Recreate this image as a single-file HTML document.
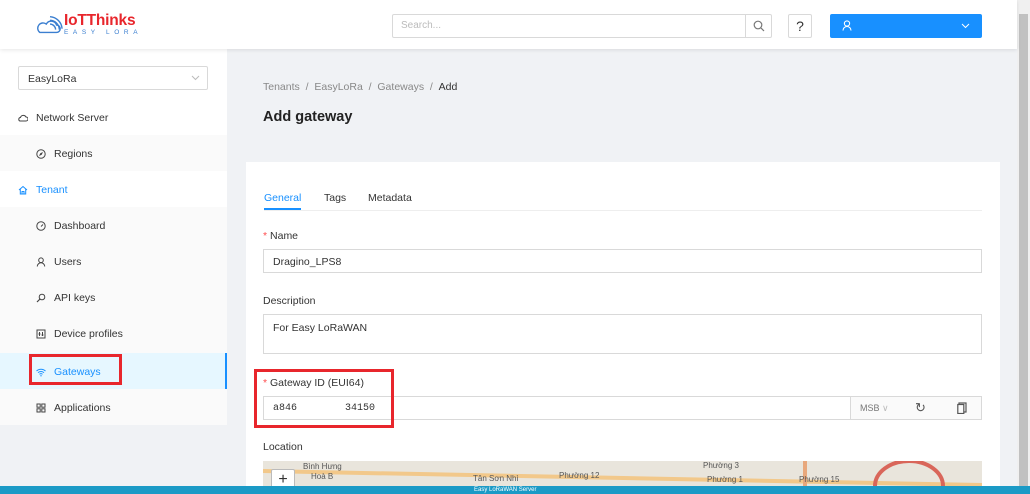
<!DOCTYPE html>
<html style="width:1030px;height:494px;overflow:hidden"><head><meta charset="utf-8"><style>
*{box-sizing:border-box;margin:0;padding:0}
html,body{width:1030px;height:494px;overflow:hidden}
body{background:#f0f2f5;font-family:"Liberation Sans",sans-serif;font-size:11px;color:#333;position:relative}
.abs{position:absolute}
.hdr{left:0;top:0;width:1017px;height:49px;background:#fff;box-shadow:0 1px 4px rgba(0,0,0,.1);z-index:2}
.side{left:0;top:49px;width:227px;height:376px;background:#fff}
.mi{position:absolute;left:0;width:227px;height:36px;line-height:38px;font-size:10.5px;color:#333}
.sub{background:#fafafa}
.ic{position:absolute;top:14px;width:10px;height:10px}
.card{left:246px;top:162px;width:754px;height:324px;background:#fff;overflow:hidden}
.inp{position:absolute;border:1px solid #d9d9d9;background:#fff;font-size:10.5px;color:#333;padding-left:9px}
.lbl{position:absolute;font-size:10.5px;color:#333}
.red{color:#ff4d4f}
.mt{position:absolute;font-size:8px;color:#555}
</style></head><body>
<div class="abs hdr">
  <svg class="abs" style="left:37px;top:14px" width="26" height="22" viewBox="0 0 28 22"><path d="M3 19h18a4 4 0 0 0 0-8 6 6 0 0 0-11-1 4.5 4.5 0 0 0-7 9z" fill="none" stroke="#3b7fd0" stroke-width="1.5"/><path d="M14 10a6 6 0 0 1 6 6M14 6a10 10 0 0 1 10 10M14 2a14 14 0 0 1 13 13" fill="none" stroke="#3b7fd0" stroke-width="1.5"/></svg>
  <div class="abs" style="left:64px;top:12px;font-weight:bold;font-size:15.5px;color:#e8262c;letter-spacing:-0.2px">IoTThinks</div>
  <div class="abs" style="left:64px;top:29px;font-size:6.5px;color:#3b7fd0;letter-spacing:4.6px">EASY LORA</div>
  <div class="abs" style="left:392px;top:14px;width:380px;height:24px;border:1px solid #d9d9d9;border-radius:2px;font-size:10px;color:#bbb;line-height:22px;padding-left:8px">Search...</div>
  <div class="abs" style="left:745px;top:14px;width:27px;height:24px;border-left:1px solid #d9d9d9"><svg style="margin:6px 0 0 7px" width="12" height="12" viewBox="0 0 12 12"><circle cx="5" cy="5" r="3.8" fill="none" stroke="#777" stroke-width="1.2"/><path d="M8 8l3 3" stroke="#777" stroke-width="1.2"/></svg></div>
  <div class="abs" style="left:788px;top:14px;width:24px;height:24px;border:1px solid #d9d9d9;border-radius:2px;text-align:center;line-height:22px;font-size:14px;color:#333">?</div>
  <div class="abs" style="left:830px;top:14px;width:152px;height:24px;background:#1890ff;border-radius:2px"><svg class="abs" style="left:12px;top:6px" width="10" height="11" viewBox="0 0 10 11"><circle cx="5" cy="3.5" r="2.6" fill="none" stroke="#fff" stroke-width="1.1"/><path d="M1 10.5a4 4 0 0 1 8 0" fill="none" stroke="#fff" stroke-width="1.1"/></svg><svg class="abs" style="left:131px;top:9px" width="9" height="6" viewBox="0 0 9 6"><path d="M1 1l3.5 3.5L8 1" fill="none" stroke="#fff" stroke-width="1"/></svg></div>
</div>
<div class="abs" style="left:1017px;top:0;width:13px;height:486px;background:#f0f0f0"><div style="margin:14px 0 0 2px;width:9px;height:472px;background:#c1c1c1"></div></div>
<div class="abs side">
  <div class="abs" style="left:18px;top:17px;width:190px;height:24px;border:1px solid #d9d9d9;border-radius:2px;line-height:24px;padding-left:9px;font-size:10.5px">EasyLoRa<svg class="abs" style="left:172px;top:8px" width="9" height="6" viewBox="0 0 9 6"><path d="M1 1l3.5 3.5L8 1" fill="none" stroke="#bbb" stroke-width="1"/></svg></div>
  <div class="mi" style="top:50px;padding-left:36px"><svg class="ic" style="left:18px" viewBox="0 0 10 10"><path d="M2 8h6a2 2 0 0 0 0-4 3 3 0 0 0-5.5 0.5A1.8 1.8 0 0 0 2 8z" fill="none" stroke="#444" stroke-width="1"/></svg>Network Server</div>
  <div class="mi sub" style="top:86px;padding-left:54px"><svg class="ic" style="left:36px" viewBox="0 0 10 10"><circle cx="5" cy="5" r="4.2" fill="none" stroke="#444" stroke-width="1"/><path d="M3 7l1.3-2.7L7 3 5.7 5.7z" fill="#444"/></svg>Regions</div>
  <div class="mi" style="top:122px;padding-left:36px;color:#1890ff"><svg class="ic" style="left:18px" viewBox="0 0 10 10"><path d="M1 5L5 1.5 9 5M2.3 4v5h5.4V4M4 9V6.5h2V9" fill="none" stroke="#1890ff" stroke-width="1"/></svg>Tenant</div>
  <div class="abs sub" style="left:0;top:158px;width:227px;height:218px"></div>
  <div class="mi" style="top:158px;padding-left:54px"><svg class="ic" style="left:36px" viewBox="0 0 10 10"><circle cx="5" cy="5" r="4.2" fill="none" stroke="#444" stroke-width="1"/><path d="M5 5.5L7 3.5" stroke="#444"/></svg>Dashboard</div>
  <div class="mi" style="top:194px;padding-left:54px"><svg class="ic" style="left:36px" viewBox="0 0 10 10"><circle cx="5" cy="3.2" r="2.3" fill="none" stroke="#444" stroke-width="1"/><path d="M1.3 9.5a3.7 3.7 0 0 1 7.4 0" fill="none" stroke="#444" stroke-width="1"/></svg>Users</div>
  <div class="mi" style="top:230px;padding-left:54px"><svg class="ic" style="left:36px" viewBox="0 0 10 10"><circle cx="6" cy="4" r="2.8" fill="none" stroke="#444" stroke-width="1"/><path d="M4 6L1 9" stroke="#444" stroke-width="1.2"/></svg>API keys</div>
  <div class="mi" style="top:266px;padding-left:54px"><svg class="ic" style="left:36px" viewBox="0 0 10 10"><rect x="1" y="1" width="8" height="8" fill="none" stroke="#444" stroke-width="1"/><path d="M3.5 3v4M6.5 3v4M2.5 5h2M5.5 6h2" stroke="#444"/></svg>Device profiles</div>
  <div class="mi" style="top:304px;padding-left:54px;background:#e6f7ff;color:#1890ff;border-right:2px solid #1890ff"><svg class="ic" style="left:36px" viewBox="0 0 10 10"><path d="M0.5 4a6.5 6.5 0 0 1 9 0M2 5.7a4.3 4.3 0 0 1 6 0M3.5 7.3a2 2 0 0 1 3 0" fill="none" stroke="#1890ff" stroke-width="1"/><circle cx="5" cy="8.8" r=".7" fill="#1890ff"/></svg>Gateways</div>
  <div class="abs" style="left:29px;top:305px;width:93px;height:31px;border:3px solid #e8262c"></div>
  <div class="mi" style="top:340px;padding-left:54px"><svg class="ic" style="left:36px" viewBox="0 0 10 10"><rect x="1" y="1" width="3.2" height="3.2" fill="none" stroke="#444"/><rect x="5.8" y="1" width="3.2" height="3.2" fill="none" stroke="#444"/><rect x="1" y="5.8" width="3.2" height="3.2" fill="none" stroke="#444"/><rect x="5.8" y="5.8" width="3.2" height="3.2" fill="none" stroke="#444"/></svg>Applications</div>
</div>
<div class="abs" style="left:263px;top:81px;font-size:10.5px;color:#888">Tenants &nbsp;/ &nbsp;EasyLoRa &nbsp;/ &nbsp;Gateways &nbsp;/ &nbsp;<span style="color:#333">Add</span></div>
<div class="abs" style="left:263px;top:109px;font-size:14.5px;font-weight:bold;color:#222">Add gateway</div>
<div class="abs card">
  <div class="abs" style="left:18px;top:30px;font-size:10.5px;color:#1890ff">General</div>
  <div class="abs" style="left:78px;top:30px;font-size:10.5px">Tags</div>
  <div class="abs" style="left:122px;top:30px;font-size:10.5px">Metadata</div>
  <div class="abs" style="left:18px;top:48px;width:718px;height:1px;background:#eee"></div>
  <div class="abs" style="left:18px;top:46px;width:37px;height:2px;background:#1890ff"></div>
  <div class="lbl" style="left:17px;top:68px"><span class="red">* </span>Name</div>
  <div class="inp" style="left:17px;top:87px;width:719px;height:24px;line-height:24px">Dragino_LPS8</div>
  <div class="lbl" style="left:17px;top:133px">Description</div>
  <div class="inp" style="left:17px;top:152px;width:719px;height:40px;padding-top:7px">For Easy LoRaWAN</div>
  <div class="lbl" style="left:17px;top:215px"><span class="red">* </span>Gateway ID (EUI64)</div>
  <div class="inp" style="left:17px;top:234px;width:719px;height:24px;line-height:24px;font-family:'Liberation Mono',monospace;font-size:10px">a846&nbsp;&nbsp;&nbsp;&nbsp;&nbsp;&nbsp;&nbsp;&nbsp;34150</div>
  <div class="abs" style="left:604px;top:235px;width:131px;height:22px;background:#fafafa;border-left:1px solid #d9d9d9;font-size:9px;color:#777;line-height:22px;padding-left:9px">MSB <span style="color:#bbb">∨</span><span style="position:absolute;left:64px;font-size:13px;color:#555">↻</span><svg class="abs" style="left:106px;top:5px" width="10" height="12" viewBox="0 0 10 12"><rect x="2" y="1" width="7" height="9" fill="none" stroke="#555" stroke-width="1.2"/><rect x="0.8" y="2.5" width="6" height="9" fill="#fafafa" stroke="#555" stroke-width="1.2"/></svg></div>
  <div class="abs" style="left:8px;top:207px;width:140px;height:59px;border:3px solid #e8262c"></div>
  <div class="lbl" style="left:17px;top:279px">Location</div>
  <svg class="abs" style="left:17px;top:299px" width="719" height="25" viewBox="0 0 719 25"><rect width="719" height="25" fill="#e9e5dc"/><path d="M0 10L719 24" stroke="#f2c88a" stroke-width="4"/><path d="M542 0V25" stroke="#e8a87c" stroke-width="4"/><path d="M612 25a34 25 0 0 1 68 0" fill="none" stroke="#d9665a" stroke-width="4"/></svg>
  <div class="abs" style="left:25px;top:307px;width:24px;height:17px;background:#fff;border:1px solid #bbb;border-bottom:none;border-radius:2px 2px 0 0;text-align:center;font-size:16px;line-height:20px;color:#333">+</div>
  <div class="mt" style="left:57px;top:300px">Bình Hưng</div>
  <div class="mt" style="left:65px;top:310px">Hoà B</div>
  <div class="mt" style="left:227px;top:312px">Tân Sơn Nhì</div>
  <div class="mt" style="left:313px;top:309px">Phường 12</div>
  <div class="mt" style="left:457px;top:299px">Phường 3</div>
  <div class="mt" style="left:461px;top:313px">Phường 1</div>
  <div class="mt" style="left:553px;top:313px">Phường 15</div>
</div>
<div class="abs" style="left:0;top:486px;width:1030px;height:8px;background:#1b9ac6;font-size:6px;color:#fff;line-height:8px;padding-left:474px;z-index:3;overflow:hidden">Easy LoRaWAN Server</div>
</body></html>
